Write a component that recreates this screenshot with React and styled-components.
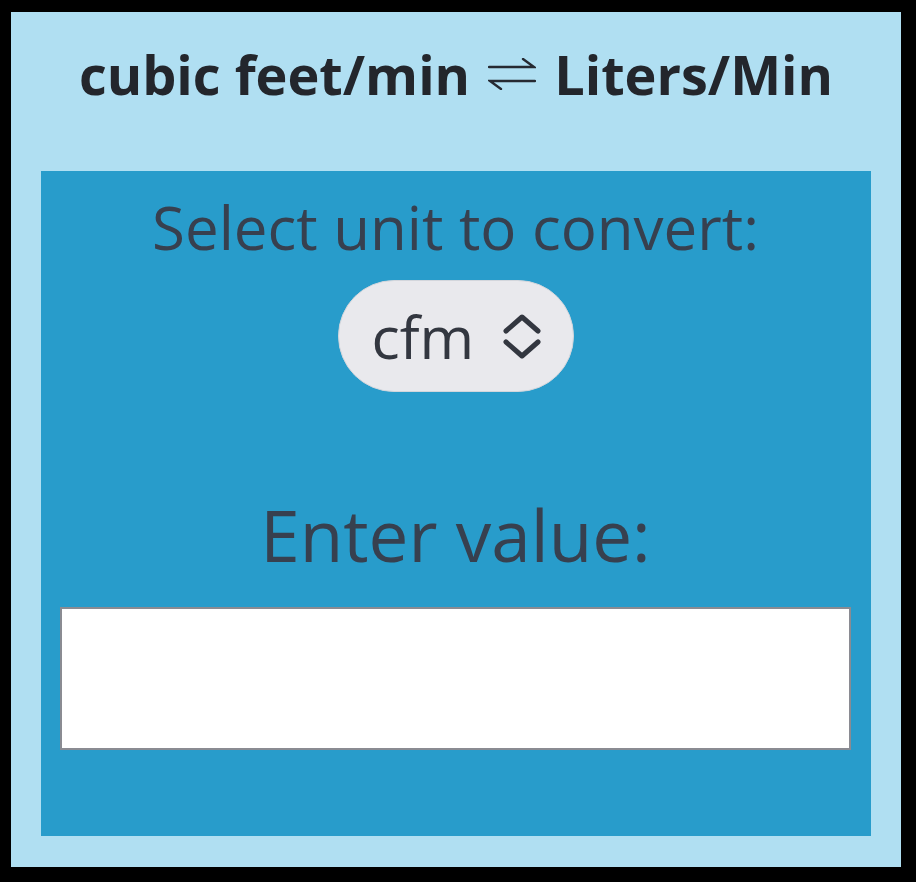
import React, { useState } from 'react';
import styled, { createGlobalStyle } from 'styled-components';

const GlobalStyle = createGlobalStyle`
  html, body {
    margin: 0;
    padding: 0;
    background: #000;
  }
  body {
    font-family: 'Open Sans', 'Liberation Sans', sans-serif;
  }
`;

const App = () => {
  const [unit, setUnit] = useState('cfm');
  const [value, setValue] = useState('');

  return (
    <Page>
      <GlobalStyle />
      <Card>
        <Title>
          cubic feet/min{' '}
          <Arrow viewBox='0 0 48 32' role='img' aria-label='⇌'>
            <path d='M1 9 H46 L35 1' />
            <path d='M47 23 H2 L13 31' />
          </Arrow>{' '}
          Liters/Min
        </Title>
        <Panel>
          <Label>Select unit to convert:</Label>
          <SelectPill>
            <UnitSelect value={unit} onChange={(e) => setUnit(e.target.value)}>
              <option value='cfm'>cfm</option>
              <option value='lpm'>L/min</option>
            </UnitSelect>
            <Chevrons viewBox='0 0 40 46' aria-hidden='true'>
              <path d='M4 18 L20 4 L36 18' />
              <path d='M4 29 L20 43 L36 29' />
            </Chevrons>
          </SelectPill>
          <ValueLabel>Enter value:</ValueLabel>
          <ValueInput type='text' value={value} onChange={(e) => setValue(e.target.value)} />
        </Panel>
      </Card>
    </Page>
  );
};

// Styles
const Page = styled.div`
  padding: 12px 15px 15px 11px;
  min-height: 882px;
  box-sizing: border-box;
`;

const Card = styled.div`
  background: #b0dff2;
  padding: 0 30px 31px;
  display: flex;
  flex-direction: column;
`;

const Title = styled.h1`
  margin: 0;
  padding: 26px 0 61px;
  font-size: 54px;
  line-height: 72px;
  font-weight: 700;
  color: #23262c;
  text-align: center;
  white-space: nowrap;
`;

const Arrow = styled.svg`
  width: 48px;
  height: 32px;
  margin: 0 4px;
  vertical-align: 5px;
  fill: none;
  stroke: #262a32;
  stroke-width: 2.4;
  stroke-linecap: round;
  stroke-linejoin: miter;
`;

const Panel = styled.div`
  background: #289ccb;
  height: 665px;
  box-sizing: border-box;
  padding: 22px 20px 0 19px;
  display: flex;
  flex-direction: column;
  align-items: center;
`;

const Label = styled.div`
  font-size: 60px;
  line-height: 68px;
  color: #37404f;
`;

const SelectPill = styled.div`
  margin-top: 19px;
  height: 112px;
  width: 236px;
  box-sizing: border-box;
  border-radius: 56px;
  background: #e9e9ed;
  border: 1px solid #d3d6dc;
  display: flex;
  align-items: center;
  padding: 0 31px 0 33px;
  justify-content: space-between;
`;

const UnitSelect = styled.select`
  appearance: none;
  -webkit-appearance: none;
  border: none;
  background: transparent;
  font-family: 'Open Sans', 'Liberation Sans', sans-serif;
  font-size: 59px;
  color: #333740;
  width: 120px;
  padding: 0;
  outline: none;
`;

const Chevrons = styled.svg`
  width: 40px;
  height: 46px;
  flex-shrink: 0;
  fill: none;
  stroke: #333740;
  stroke-width: 5;
  stroke-linecap: round;
  stroke-linejoin: round;
`;

const ValueLabel = styled.div`
  margin-top: 101px;
  font-size: 71px;
  line-height: 84px;
  color: #37404f;
`;

const ValueInput = styled.input`
  margin-top: 30px;
  width: 100%;
  height: 143px;
  box-sizing: border-box;
  background: #fff;
  border: 2px solid #8a8b92;
  font-family: 'Open Sans', 'Liberation Sans', sans-serif;
  font-size: 48px;
  padding: 0 12px;
  outline: none;
`;

export default App;
